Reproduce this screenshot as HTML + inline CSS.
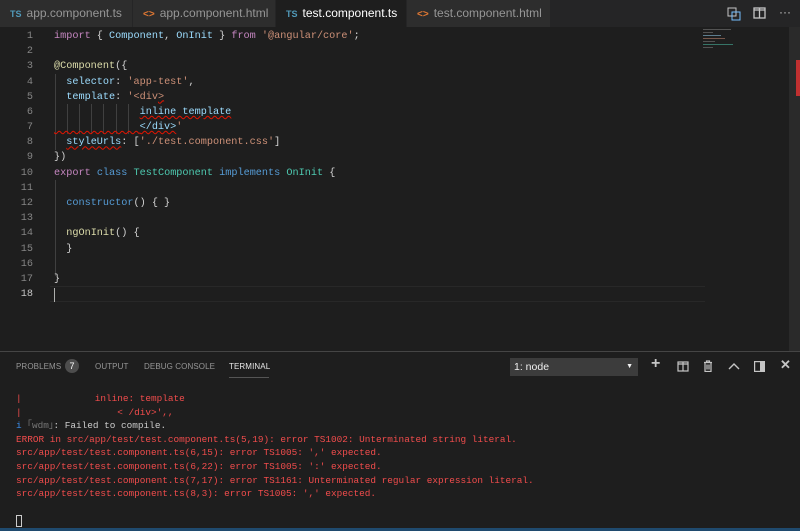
<!DOCTYPE html>
<html><head><meta charset="utf-8"><style>
*{margin:0;padding:0;box-sizing:border-box}
body{width:800px;height:530px;background:#1e1e1e;overflow:hidden;position:relative;font-family:"Liberation Sans",sans-serif}
.tabs{position:absolute;top:0;left:0;width:800px;height:27px;background:#252526}
.tab{position:absolute;top:0;height:27px;background:#2d2d2d;color:#969696;font-size:12px;line-height:27px;padding-left:10px;white-space:nowrap}
.tab.act{background:#1e1e1e;color:#fff}
.ts{color:#519aba;font-size:9px;font-weight:bold;margin-right:5px}
.ht{color:#e37933;font-size:10px;font-weight:bold;margin-right:5px}
.code{position:absolute;top:29px;left:0;font-family:"Liberation Mono",monospace;font-size:10.2px}
.ln{position:absolute;left:0;width:33px;text-align:right;color:#858585;height:15.18px;line-height:15.18px}
.l{position:absolute;left:54px;white-space:pre;color:#d4d4d4;line-height:15.18px}
.k{color:#c586c0}.b{color:#569cd6}.v{color:#9cdcfe}.s{color:#ce9178}.t{color:#4ec9b0}.f{color:#dcdcaa}.w{text-decoration:underline wavy #e51400;text-decoration-thickness:1px}
.g{position:absolute;width:1px;background:#404040}
.panel{position:absolute;top:351px;left:0;width:800px;height:179px;background:#1e1e1e;border-top:1px solid #454545}
.ph{position:absolute;top:10px;font-size:8px;color:#969696;letter-spacing:.1px}
.term{position:absolute;left:16px;top:40px;font-family:"Liberation Mono",monospace;font-size:9.4px;line-height:13.6px;white-space:pre;color:#f14c4c}
</style></head><body>
<div class="tabs">
<div class="tab" style="left:0;width:132px"><span class="ts">TS</span>app.component.ts</div>
<div class="tab" style="left:133px;width:142px"><span class="ht">&lt;&gt;</span>app.component.html</div>
<div class="tab act" style="left:276px;width:130px"><span class="ts">TS</span>test.component.ts <span style="margin-left:6px;font-size:12px">✕</span></div>
<div class="tab" style="left:407px;width:143px"><span class="ht">&lt;&gt;</span>test.component.html</div>
<svg style="position:absolute;left:727px;top:7px" width="14" height="14" viewBox="0 0 14 14" fill="none" stroke="#c5c5c5"><rect x="1" y="1" width="8" height="8"/><rect x="5" y="5" width="8" height="8" stroke="#75beff"/></svg>
<svg style="position:absolute;left:753px;top:7px" width="13" height="12" viewBox="0 0 13 12" fill="none" stroke="#c5c5c5" stroke-width="1.3"><rect x="1" y="1" width="11" height="10"/><path d="M6.5 1v10M1 3h11"/></svg>
<div style="position:absolute;left:779px;top:5px;color:#c5c5c5;font-size:12px">···</div>
</div>
<div style="position:absolute;left:703px;top:27px;width:40px;height:30px;opacity:.5">
<div style="height:1px;width:28px;background:#888;margin-top:2px"></div><div style="height:1px;width:10px;background:#888;margin-top:2px"></div><div style="height:1px;width:18px;background:#9cdcfe;margin-top:2px"></div><div style="height:1px;width:22px;background:#ce9178;margin-top:2px"></div><div style="height:1px;width:12px;background:#888;margin-top:2px"></div><div style="height:1px;width:30px;background:#4ec9b0;margin-top:2px"></div><div style="height:1px;width:10px;background:#888;margin-top:2px"></div></div>
<div style="position:absolute;left:789px;top:27px;width:11px;height:324px;background:#2a2a2a"></div>
<div style="position:absolute;left:796px;top:60px;width:4px;height:36px;background:#c03030"></div>
<div style="position:absolute;left:50px;top:286px;width:655px;height:16px;border-top:1px solid #282828;border-bottom:1px solid #282828"></div>
<div class="g" style="left:55px;top:74px;height:76px"></div>
<div class="g" style="left:67px;top:104px;height:30px"></div>
<div class="g" style="left:79px;top:104px;height:30px"></div>
<div class="g" style="left:91px;top:104px;height:30px"></div>
<div class="g" style="left:103px;top:104px;height:30px"></div>
<div class="g" style="left:116px;top:104px;height:30px"></div>
<div class="g" style="left:128px;top:104px;height:30px"></div>
<div class="g" style="left:55px;top:180px;height:96px"></div>
<div class="code">
<div class="ln" style="top:0">1</div><div class="ln" style="top:15.18px">2</div><div class="ln" style="top:30.36px">3</div><div class="ln" style="top:45.54px">4</div><div class="ln" style="top:60.72px">5</div><div class="ln" style="top:75.9px">6</div><div class="ln" style="top:91.08px">7</div><div class="ln" style="top:106.26px">8</div><div class="ln" style="top:121.44px">9</div><div class="ln" style="top:136.62px">10</div><div class="ln" style="top:151.8px">11</div><div class="ln" style="top:166.98px">12</div><div class="ln" style="top:182.16px">13</div><div class="ln" style="top:197.34px">14</div><div class="ln" style="top:212.52px">15</div><div class="ln" style="top:227.7px">16</div><div class="ln" style="top:242.88px">17</div><div class="ln" style="top:258.06px;color:#c6c6c6">18</div>
<div class="l" style="top:0"><span class="k">import</span> { <span class="v">Component</span>, <span class="v">OnInit</span> } <span class="k">from</span> <span class="s">'@angular/core'</span>;</div>
<div class="l" style="top:30.36px"><span class="f">@Component</span>({</div>
<div class="l" style="top:45.54px">  <span class="v">selector</span>: <span class="s">'app-test'</span>,</div>
<div class="l" style="top:60.72px">  <span class="v">template</span>: <span class="s">'&lt;div<span class="w">&gt;</span></span></div>
<div class="l" style="top:75.9px">              <span class="v w">inline template</span></div>
<div class="l" style="top:91.08px"><span class="w">              </span><span class="v w">&lt;/div&gt;</span><span class="s">'</span></div>
<div class="l" style="top:106.26px">  <span class="v w">styleUrls</span>: [<span class="s">'./test.component.css'</span>]</div>
<div class="l" style="top:121.44px">})</div>
<div class="l" style="top:136.62px"><span class="k">export</span> <span class="b">class</span> <span class="t">TestComponent</span> <span class="b">implements</span> <span class="t">OnInit</span> {</div>
<div class="l" style="top:166.98px">  <span class="b">constructor</span>() { }</div>
<div class="l" style="top:197.34px">  <span class="f">ngOnInit</span>() {</div>
<div class="l" style="top:212.52px">  }</div>
<div class="l" style="top:242.88px">}</div>
<div style="position:absolute;left:54px;top:259px;width:1px;height:14px;background:#aeafad"></div>
</div>
<div class="panel">
<div class="ph" style="left:16px">PROBLEMS</div>
<div style="position:absolute;left:65px;top:7px;width:14px;height:14px;border-radius:7px;background:#4d4d4d;color:#fff;font-size:9px;text-align:center;line-height:14px">7</div>
<div class="ph" style="left:95px">OUTPUT</div>
<div class="ph" style="left:144px">DEBUG CONSOLE</div>
<div class="ph" style="left:229px;color:#e7e7e7">TERMINAL</div>
<div style="position:absolute;left:229px;top:25px;width:40px;height:1px;background:#555"></div>
<div style="position:absolute;left:510px;top:6px;width:128px;height:18px;background:#3c3c3c;color:#f0f0f0;font-size:10.5px;line-height:18px;padding-left:4px">1: node<span style="position:absolute;right:5px;font-size:7px">▼</span></div>
<div style="position:absolute;left:651px;top:3px;color:#c5c5c5;font-size:16px;font-weight:bold">+</div>
<svg style="position:absolute;left:677px;top:9px" width="12" height="11" viewBox="0 0 12 11" fill="none" stroke="#c5c5c5" stroke-width="1.2"><rect x="1" y="1" width="10" height="9"/><path d="M6 1v9M1 3h10"/></svg>
<svg style="position:absolute;left:703px;top:8px" width="10" height="12" viewBox="0 0 10 12" fill="none" stroke="#c5c5c5" stroke-width="1.2"><path d="M1 2.5h8M3.5 2.5V1h3v1.5M2 2.5v9h6v-9M4 4.5v5M6 4.5v5"/></svg>
<svg style="position:absolute;left:728px;top:10px" width="12" height="8" viewBox="0 0 12 8" fill="none" stroke="#c5c5c5" stroke-width="1.4"><path d="M1 7l5-5 5 5"/></svg>
<svg style="position:absolute;left:754px;top:9px" width="11" height="11" viewBox="0 0 11 11"><rect x="0.6" y="0.6" width="9.8" height="9.8" fill="none" stroke="#c5c5c5" stroke-width="1.2"/><rect x="6" y="1" width="4" height="9" fill="#c5c5c5"/></svg>
<div style="position:absolute;left:780px;top:5px;color:#c5c5c5;font-size:13px;font-weight:bold">✕</div>
<div class="term">|             inline: template
|                 &lt; /div&gt;',,
<span style="color:#3b8eea">i</span> <span style="color:#777">｢wdm｣</span><span style="color:#ccc">: Failed to compile.</span>
ERROR in src/app/test/test.component.ts(5,19): error TS1002: Unterminated string literal.
src/app/test/test.component.ts(6,15): error TS1005: ',' expected.
src/app/test/test.component.ts(6,22): error TS1005: ':' expected.
src/app/test/test.component.ts(7,17): error TS1161: Unterminated regular expression literal.
src/app/test/test.component.ts(8,3): error TS1005: ',' expected.
</div>
<div style="position:absolute;left:16px;top:163px;width:6px;height:12px;border:1px solid #ccc"></div>
<div style="position:absolute;left:0;top:176px;width:800px;height:3px;background:#1f4a6e"></div>
</div>
</body></html>
